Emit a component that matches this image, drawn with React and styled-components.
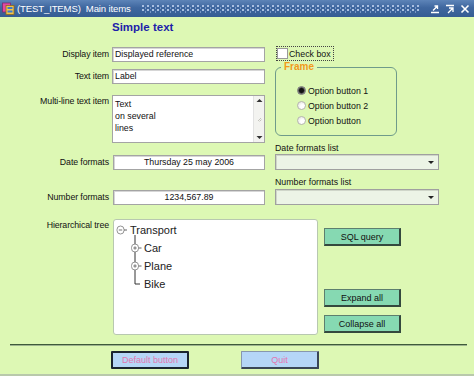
import styled, { createGlobalStyle } from "styled-components";

const Global = createGlobalStyle`
  html, body {
    margin: 0;
    padding: 0;
    background: #ddf8b4;
  }
  body {
    font-family: "Liberation Sans", Arial, sans-serif;
  }
`;

const Window = styled.div`
  width: 474px;
  height: 376px;
  background: #ddf8b4;
  display: flex;
  flex-direction: column;
  overflow: hidden;
  box-sizing: border-box;
  border-bottom: 2px solid #b9c9ab;
`;

const TitleBar = styled.div`
  height: 17px;
  background: linear-gradient(#5d84b8, #3f679f 45%, #355c93);
  display: flex;
  align-items: center;
  padding: 0 4px 0 2px;
  color: #fff;
  font-size: 9.6px;
  gap: 2px;
`;

const TitleText = styled.span`
  white-space: pre;
  letter-spacing: -0.15px;
`;

const Dots = styled.div`
  flex: 1;
  height: 8px;
  margin: 0 8px 0 9px;
  background-image: radial-gradient(circle at 1px 1px, rgba(190, 208, 238, 0.85) 0.9px, transparent 1.1px),
    radial-gradient(circle at 3.5px 3px, rgba(160, 185, 225, 0.6) 0.8px, transparent 1px);
  background-size: 5px 4px;
`;

const WinButtons = styled.div`
  display: flex;
  gap: 5px;
  align-items: center;
`;

const Content = styled.div`
  display: flex;
  flex-direction: column;
  font-size: 8.8px;
  color: #111;
`;

const Heading = styled.div`
  height: 30px;
  padding: 4px 0 0 112px;
  box-sizing: border-box;
  font-size: 11.5px;
  font-weight: bold;
  color: #1e1eaa;
`;

const TopSection = styled.div`
  display: flex;
`;

const LeftCol = styled.div`
  display: flex;
  flex-direction: column;
  width: 275px;
`;

const RightCol = styled.div`
  display: flex;
  flex-direction: column;
  align-items: flex-start;
  margin-top: -1px;
`;

const Row = styled.div`
  display: flex;
  align-items: ${(p) => (p.$bottom ? "flex-end" : "flex-start")};
  margin-top: ${(p) => p.$top || 0}px;
`;

const Label = styled.div`
  width: 109px;
  padding-right: 3px;
  text-align: right;
  line-height: ${(p) => p.$lh || 15}px;
  white-space: nowrap;
  letter-spacing: -0.1px;
`;

const Field = styled.div`
  width: ${(p) => p.$w || 153}px;
  height: ${(p) => p.$h || 15}px;
  box-sizing: border-box;
  background: #fff;
  border: 1px solid #a4a4a4;
  box-shadow: inset 1px 1px 0 #d6d6d6;
  line-height: 13px;
  padding: 0 2px;
  text-align: ${(p) => (p.$center ? "center" : "left")};
  white-space: nowrap;
  overflow: hidden;
`;

const TextArea = styled.div`
  width: 153px;
  height: 48px;
  box-sizing: border-box;
  background: #fff;
  border: 1px solid #a4a4a4;
  display: flex;
`;

const TextLines = styled.div`
  flex: 1;
  padding: 2px 2px;
  line-height: 12px;
`;

const ScrollBar = styled.div`
  width: 11px;
  background: #f3f3f0;
  border-left: 1px solid #e2e2e2;
  display: flex;
  flex-direction: column;
  justify-content: space-between;
  align-items: center;
  padding: 2px 0;
  box-sizing: border-box;
`;

const CheckWrap = styled.label`
  display: flex;
  align-items: center;
  gap: 1px;
  border: 1px dotted #444;
  height: 13px;
  padding-right: 2px;
  margin-left: 1px;
`;

const CheckSquare = styled.span`
  width: 9px;
  height: 9px;
  background: #fff;
  border: 1px solid #999;
  display: inline-block;
`;

const Frame = styled.fieldset`
  margin: 1px 0 0 0;
  width: 122px;
  height: 74px;
  box-sizing: border-box;
  border: 1.5px solid #6f9b8a;
  border-radius: 6px;
  padding: 12px 0 0 21px;
  display: flex;
  flex-direction: column;
  gap: 2px;
`;

const Legend = styled.legend`
  color: #f29a1a;
  font-size: 10px;
  font-weight: bold;
  padding: 0 3px;
  margin-left: -16px;
  line-height: 10px;
`;

const Option = styled.div`
  display: flex;
  align-items: center;
  gap: 2px;
  height: 13px;
`;

const Radio = styled.span`
  width: 7px;
  height: 7px;
  border-radius: 50%;
  background: ${(p) =>
    p.$on ? "radial-gradient(circle, #111 40%, #555 60%, #bbb 80%)" : "radial-gradient(circle at 65% 65%, #fff 30%, #e6e6e0 80%)"};
  border: 1px solid ${(p) => (p.$on ? "#777" : "#b4b4b0")};
`;

const ListGroup = styled.div`
  display: flex;
  flex-direction: column;
  margin-left: 10px;
`;

const ListLabel = styled.div`
  line-height: 11px;
`;

const Select = styled.div`
  width: 164px;
  height: 16px;
  box-sizing: border-box;
  background: #ecf4e6;
  border: 1px solid #a0a0a0;
  box-shadow: inset 1px 1px 0 #cfd6c9;
  display: flex;
  align-items: center;
  justify-content: flex-end;
  padding-right: 4px;
`;

const Caret = styled.span`
  width: 0;
  height: 0;
  border-left: 3px solid transparent;
  border-right: 3px solid transparent;
  border-top: 3px solid #222;
`;

const TreeRow = styled.div`
  display: flex;
  align-items: flex-start;
  margin-top: 14px;
`;

const TreeBox = styled.div`
  width: 205px;
  height: 116px;
  box-sizing: border-box;
  margin-left: 1px;
  background: #fff;
  border: 1px solid #b8c8b0;
  border-radius: 3px;
  padding: 1px 0 0 2px;
  font-size: 11px;
  color: #222;
`;

const Node = styled.div`
  display: flex;
  align-items: center;
  height: 18px;
  padding-left: ${(p) => p.$indent || 0}px;
`;

const Connector = styled.svg`
  overflow: visible;
  flex: none;
`;

const ButtonCol = styled.div`
  display: flex;
  flex-direction: column;
  margin-left: 6px;
  padding-top: 9px;
`;

const ToolButton = styled.button`
  width: 77px;
  height: 18px;
  margin-top: ${(p) => p.$top || 0}px;
  background: #86d9b2;
  border: 1px solid #5d7f6e;
  border-right: 2px solid #34493e;
  border-bottom: 2px solid #34493e;
  font-family: "Liberation Sans", Arial, sans-serif;
  font-size: 9px;
  color: #111;
  padding: 0;
`;

const Separator = styled.div`
  height: 1px;
  background: #3e5b3a;
  margin: 9px 7px 0 10px;
  border-bottom: 1px solid #9db38f;
`;

const Footer = styled.div`
  display: flex;
  padding-left: 111px;
  gap: 52px;
  margin-top: 5px;
`;

const FooterButton = styled.button`
  width: 78px;
  height: 18px;
  background: #b5d6f7;
  color: #e276b0;
  font-family: "Liberation Sans", Arial, sans-serif;
  font-size: 9px;
  padding: 0;
  border-style: solid;
  border-width: ${(p) => (p.$default ? "2px" : "1px 2px 2px 1px")};
  border-color: ${(p) => (p.$default ? "#1b2530" : "#8797ad #3a4656 #3a4656 #8797ad")};
  border-radius: 1px;
`;

function AppIcon() {
  return (
    <svg width="13" height="13" viewBox="0 0 13 13">
      <rect x="0.5" y="1" width="8" height="9" fill="#e04aa0" stroke="#7a2a70" strokeWidth="0.8" />
      <rect x="4" y="3.5" width="8" height="9" fill="#f3c44a" stroke="#8a6a20" strokeWidth="0.8" />
      <rect x="5.5" y="5" width="5" height="2" fill="#3a7ad0" />
      <rect x="5.5" y="8.5" width="5" height="2" fill="#3a7ad0" />
    </svg>
  );
}

function WinIcons() {
  return (
    <WinButtons>
      <svg width="10" height="10" viewBox="0 0 10 10">
        <path d="M1 8.5h8M3 6.5l4.5-4.5M4.5 2h3v3" stroke="#fff" strokeWidth="1.3" fill="none" />
      </svg>
      <svg width="10" height="10" viewBox="0 0 10 10">
        <path d="M1 1.5h8M4 4h4v4M8 4L3 9" stroke="#fff" strokeWidth="1.3" fill="none" />
      </svg>
      <svg width="10" height="10" viewBox="0 0 10 10">
        <path d="M1.5 1.5l7 7M8.5 1.5l-7 7" stroke="#fff" strokeWidth="1.6" fill="none" />
      </svg>
    </WinButtons>
  );
}

function ScrollArrows() {
  return (
    <ScrollBar>
      <svg width="7" height="5" viewBox="0 0 7 5">
        <path d="M0.5 4L3.5 1L6.5 4z" fill="#333" />
      </svg>
      <svg width="5" height="5" viewBox="0 0 5 5">
        <path d="M1 4l3-3M2.5 4.5l2-2" stroke="#b8b8b0" strokeWidth="0.8" />
      </svg>
      <svg width="7" height="5" viewBox="0 0 7 5">
        <path d="M0.5 1L3.5 4L6.5 1z" fill="#333" />
      </svg>
    </ScrollBar>
  );
}

function ExpandIcon({ open }) {
  return (
    <g>
      <path d="M1 5.5a3.5 3.5 0 0 1 7 0v1a3.5 3.5 0 0 1-7 0z" fill="#fff" stroke="#888" strokeWidth="0.9" />
      <path d="M2.8 6h3.4" stroke="#666" strokeWidth="0.9" />
      {!open && <path d="M4.5 4.3v3.4" stroke="#666" strokeWidth="0.9" />}
    </g>
  );
}

function TreeItem({ kind, children }) {
  if (kind === "root") {
    return (
      <Node>
        <Connector width="14" height="18" viewBox="0 0 14 18">
          <g transform="translate(0 3)">
            <ExpandIcon open />
          </g>
          <path d="M8 9h3" stroke="#555" strokeWidth="0.9" />
          <path d="M19 14v4" stroke="#333" strokeWidth="1" />
        </Connector>
        {children}
      </Node>
    );
  }
  const last = kind === "last";
  return (
    <Node $indent={14}>
      <Connector width="14" height="18" viewBox="0 0 14 18">
        <path d={last ? "M5 0v9h5" : "M5 0v18"} stroke="#333" strokeWidth="1" fill="none" />
        {kind === "branch" && (
          <>
            <g transform="translate(0.5 3)">
              <ExpandIcon />
            </g>
            <path d="M8.5 9h3" stroke="#555" strokeWidth="0.9" />
          </>
        )}
      </Connector>
      {children}
    </Node>
  );
}

export default function App() {
  return (
    <Window>
      <Global />
      <TitleBar>
        <AppIcon />
        <TitleText>(TEST_ITEMS)  Main items</TitleText>
        <Dots />
        <WinIcons />
      </TitleBar>
      <Content>
        <Heading>Simple text</Heading>
        <TopSection>
          <LeftCol>
            <Row>
              <Label>Display item</Label>
              <Field>Displayed reference</Field>
            </Row>
            <Row $top={7}>
              <Label>Text item</Label>
              <Field>Label</Field>
            </Row>
            <Row $top={11}>
              <Label $lh={13}>Multi-line text item</Label>
              <TextArea>
                <TextLines>
                  Text
                  <br />
                  on several
                  <br />
                  lines
                </TextLines>
                <ScrollArrows />
              </TextArea>
            </Row>
          </LeftCol>
          <RightCol>
            <CheckWrap>
              <CheckSquare />
              Check box
            </CheckWrap>
            <Frame>
              <Legend>Frame</Legend>
              <Option>
                <Radio $on />
                Option button 1
              </Option>
              <Option>
                <Radio />
                Option button 2
              </Option>
              <Option>
                <Radio />
                Option button
              </Option>
            </Frame>
          </RightCol>
        </TopSection>
        <Row $bottom>
          <Label>Date formats</Label>
          <Field $w={152} $center style={{ marginLeft: 1 }}>
            Thursday 25 may 2006
          </Field>
          <ListGroup>
            <ListLabel>Date formats list</ListLabel>
            <Select>
              <Caret />
            </Select>
          </ListGroup>
        </Row>
        <Row $bottom $top={7}>
          <Label>Number formats</Label>
          <Field $w={152} $center style={{ marginLeft: 1 }}>
            1234,567.89
          </Field>
          <ListGroup>
            <ListLabel style={{ marginBottom: 1 }}>Number formats list</ListLabel>
            <Select>
              <Caret />
            </Select>
          </ListGroup>
        </Row>
        <TreeRow>
          <Label $lh={12}>Hierarchical tree</Label>
          <TreeBox>
            <TreeItem kind="root">Transport</TreeItem>
            <TreeItem kind="branch">Car</TreeItem>
            <TreeItem kind="branch">Plane</TreeItem>
            <TreeItem kind="last">Bike</TreeItem>
          </TreeBox>
          <ButtonCol>
            <ToolButton>SQL query</ToolButton>
            <ToolButton $top={43}>Expand all</ToolButton>
            <ToolButton $top={8}>Collapse all</ToolButton>
          </ButtonCol>
        </TreeRow>
        <Separator />
        <Footer>
          <FooterButton $default>Default button</FooterButton>
          <FooterButton>Quit</FooterButton>
        </Footer>
      </Content>
    </Window>
  );
}
